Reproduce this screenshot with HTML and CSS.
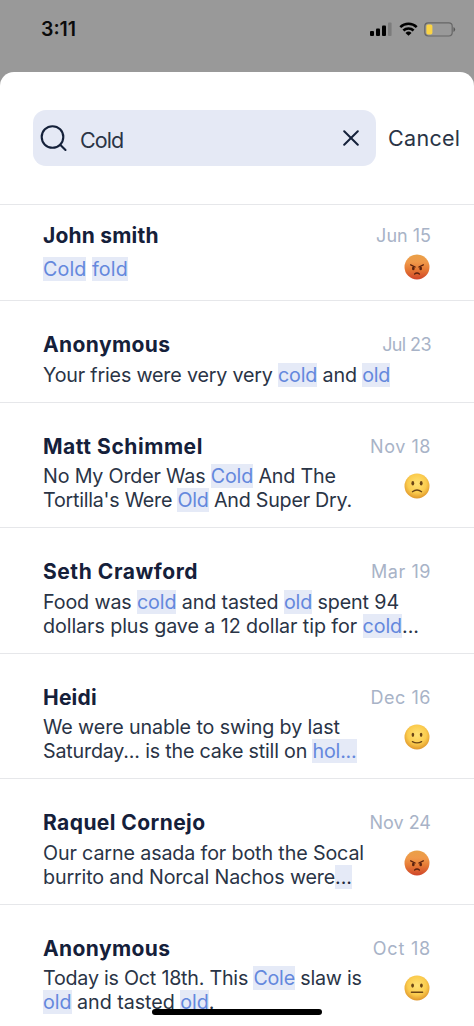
FILE: index.html
```
<!DOCTYPE html>
<html lang="en">
<head>
<meta charset="utf-8">
<title>Search</title>
<link rel="stylesheet" href="styles.css">
</head>
<body>
<svg class="defs" width="0" height="0" aria-hidden="true">
  <defs>
    <linearGradient id="red" x1="0" y1="0" x2="0" y2="1"><stop offset="0" stop-color="#e9a048"/><stop offset=".3" stop-color="#f0994a"/><stop offset=".6" stop-color="#e67a35"/><stop offset="1" stop-color="#cf452a"/></linearGradient>
    <radialGradient id="yellow" cx=".5" cy=".4" r=".62"><stop offset="0" stop-color="#ffe274"/><stop offset=".6" stop-color="#fbcc4e"/><stop offset="1" stop-color="#dd9228"/></radialGradient>
    <symbol id="angry" viewBox="0 0 26 26"><circle cx="13" cy="13" r="12.5" fill="url(#red)"/><path d="M6.7 10.8l4.4 2.2M19.3 10.8l-4.4 2.2M10.6 20q2.4-2 4.8 0" fill="none" stroke="#5b220f" stroke-width="1.3" stroke-linecap="round"/><ellipse cx="9.3" cy="14.4" rx="1.3" ry="1.9" fill="#5b220f"/><ellipse cx="16.7" cy="14.4" rx="1.3" ry="1.9" fill="#5b220f"/></symbol>
    <symbol id="sad" viewBox="0 0 26 26"><circle cx="13" cy="13" r="12.5" fill="url(#yellow)"/><ellipse cx="8.8" cy="10.3" rx="1.4" ry="2.2" fill="#6b4516"/><ellipse cx="17.2" cy="10.3" rx="1.4" ry="2.2" fill="#6b4516"/><path d="M8.4 18.7q4.6-3.4 9.2 0" fill="none" stroke="#6b4516" stroke-width="1.3" stroke-linecap="round"/></symbol>
    <symbol id="smile" viewBox="0 0 26 26"><circle cx="13" cy="13" r="12.5" fill="url(#yellow)"/><ellipse cx="8.9" cy="10.8" rx="1.3" ry="2.1" fill="#6b4516"/><ellipse cx="17.1" cy="10.8" rx="1.3" ry="2.1" fill="#6b4516"/><path d="M8.4 17.6q4.6 2.6 9.2 0" fill="none" stroke="#6b4516" stroke-width="1.3" stroke-linecap="round"/></symbol>
    <symbol id="neutral" viewBox="0 0 26 26"><circle cx="13" cy="13" r="12.5" fill="url(#yellow)"/><ellipse cx="8.6" cy="10.6" rx="1.4" ry="2.1" fill="#6b4516"/><ellipse cx="17.4" cy="10.6" rx="1.4" ry="2.1" fill="#6b4516"/><path d="M7.4 17.3h11.2" fill="none" stroke="#6b4516" stroke-width="1.4" stroke-linecap="round"/></symbol>
  </defs>
</svg>
<div class="screen">
  <header class="status">
    <span class="time">3:11</span>
    <div class="indicators">
      <svg class="signal" viewBox="0 0 22 14"><rect x="0" y="9" width="4" height="5" rx="1"/><rect x="6" y="6.5" width="4" height="7.5" rx="1"/><rect x="12" y="3.5" width="4" height="10.5" rx="1"/><rect class="off" x="18" y="0.5" width="3.6" height="13.5" rx="1"/></svg>
      <svg class="wifi" viewBox="0 0 19 14"><path d="M1.3 5.2a11.6 11.6 0 0 1 16.4 0M4.4 8.5a7.2 7.2 0 0 1 10.2 0" fill="none" stroke="#000" stroke-width="2.5"/><path d="M9.5 13.8L6.5 10.9a4.3 4.3 0 0 1 6 0z"/></svg>
      <svg class="battery" viewBox="0 0 32 15"><rect x=".8" y=".8" width="27.4" height="13.2" rx="3.4" fill="none" stroke="#666" stroke-width="1.2"/><rect x="2.4" y="2.4" width="6" height="10" rx="1.6" fill="#fbd444"/><path d="M29.5 5v5q1.6-.8 1.6-2.5T29.5 5z" fill="#555"/></svg>
    </div>
  </header>
  <main class="sheet">
    <div class="search">
      <div class="field">
        <svg class="glass" viewBox="0 0 28 28"><circle cx="12.5" cy="13" r="10.8"/><path d="M20.2 20.7l5.3 5.3"/></svg>
        <span class="query">Cold</span>
        <svg class="clear" viewBox="0 0 16 16"><path d="M1.2 1.2l13.6 13.6M14.8 1.2L1.2 14.8"/></svg>
      </div>
      <span class="cancel">Cancel</span>
    </div>
    <ul class="results">
      <li class="item first">
        <div class="text"><h2 class="n1">John smith</h2><p><span class="line a1"><mark>Cold</mark> <mark>fold</mark></span></p></div>
        <div class="side"><time>Jun 15</time><svg class="emoji"><use href="#angry"/></svg></div>
      </li>
      <li class="item">
        <div class="text"><h2 class="n2">Anonymous</h2><p><span class="line b1">Your fries were very very <mark>cold</mark> and <mark>old</mark></span></p></div>
        <div class="side"><time class="t2">Jul 23</time></div>
      </li>
      <li class="item">
        <div class="text"><h2 class="n3">Matt Schimmel</h2><p><span class="line c1">No My Order Was <mark>Cold</mark> And The</span><span class="line c2">Tortilla's Were <mark>Old</mark> And Super Dry.</span></p></div>
        <div class="side"><time class="t3">Nov 18</time><svg class="emoji"><use href="#sad"/></svg></div>
      </li>
      <li class="item">
        <div class="text"><h2 class="n3">Seth Crawford</h2><p><span class="line d1">Food was <mark>cold</mark> and tasted <mark>old</mark> spent 94</span><span class="line d2">dollars plus gave a 12 dollar tip for <mark>cold</mark>...</span></p></div>
        <div class="side"><time class="t3">Mar 19</time></div>
      </li>
      <li class="item">
        <div class="text"><h2 class="n1">Heidi</h2><p><span class="line e1">We were unable to swing by last</span><span class="line e2">Saturday... is the cake still on <mark>hol...</mark></span></p></div>
        <div class="side"><time class="t3">Dec 16</time><svg class="emoji"><use href="#smile"/></svg></div>
      </li>
      <li class="item">
        <div class="text"><h2 class="n6">Raquel Cornejo</h2><p><span class="line f1">Our carne asada for both the Socal</span><span class="line f2">burrito and Norcal Nachos were<mark class="dark">...</mark></span></p></div>
        <div class="side"><time>Nov 24</time><svg class="emoji"><use href="#angry"/></svg></div>
      </li>
      <li class="item">
        <div class="text"><h2 class="n2">Anonymous</h2><p><span class="line g1">Today is Oct 18th. This <mark>Cole</mark> slaw is</span><span class="line g2"><mark>old</mark> and tasted <mark>old</mark>.</span></p></div>
        <div class="side"><time class="t7">Oct 18</time><svg class="emoji"><use href="#neutral"/></svg></div>
      </li>
    </ul>
  </main>
  <div class="home"></div>
</div>
</body>
</html>
```
FILE: styles.css
```
* { box-sizing: border-box; }
body { margin: 0; font-family: Inter, "Liberation Sans", sans-serif; color: #2a3446; background: #999; }
.defs { position: absolute; }
.screen { position: relative; width: 474px; height: 1026px; overflow: hidden; background: #999; }
.status { height: 72px; padding: 15px 18px 0 41px; display: flex; justify-content: space-between; align-items: flex-start; }
.time { font-size: 19.5px; line-height: 28px; font-weight: 600; color: #0b0b0b; }
.indicators { display: flex; align-items: center; height: 28px; }
.signal { width: 22px; height: 14px; margin-right: 7px; }
.signal .off { fill: #7c7c7c; }
.wifi { width: 19px; height: 14px; margin-right: 6px; }
.battery { width: 32px; height: 15px; }
.sheet { background: #fff; border-radius: 14px 14px 0 0; height: 954px; padding-top: 38px; }
.search { display: flex; align-items: center; height: 56px; margin-left: 33px; }
.field { width: 343px; height: 56px; border-radius: 13px; background: #e5e9f5; display: flex; align-items: center; padding: 0 17px 0 7px; }
.glass { width: 28px; height: 28px; fill: none; stroke: #15213a; stroke-width: 2.1; stroke-linecap: round; }
.query { flex: 1; margin-left: 12px; padding-top: 4px; font-size: 21.5px; letter-spacing: -.9px; }
.clear { width: 16px; height: 16px; fill: none; stroke: #15213a; stroke-width: 2; stroke-linecap: round; }
.cancel { margin-left: 12px; font-size: 21.5px; letter-spacing: .3px; }
.results { list-style: none; margin: 38px 0 0; padding: 0; border-top: 1px solid #e6e7ea; }
.item { height: 125.5px; border-bottom: 1px solid #e6e7ea; padding: 29px 43px 0; display: flex; }
.item:nth-child(2) { height: 101.5px; }
.item.first { height: 96px; padding-top: 16px; }
.text { width: 318px; flex: none; white-space: nowrap; }
h2 { margin: 0 0 3.5px; font-size: 21px; line-height: 29px; font-weight: 700; color: #15203a; }
.first h2 { margin-bottom: 6.5px; }
.n1 { letter-spacing: .2px; }
.n2 { letter-spacing: .4px; }
.n3 { letter-spacing: .55px; }
.n6 { letter-spacing: .42px; }
p { margin: 0; font-size: 19.7px; line-height: 24px; }
.line { display: block; height: 24px; }
.a1 { letter-spacing: .1px; }
.b1 { letter-spacing: -.18px; }
.c1 { letter-spacing: -.18px; }
.c2 { letter-spacing: -.24px; }
.d1 { letter-spacing: -.13px; }
.d2 { letter-spacing: -.08px; }
.e1 { letter-spacing: -.1px; }
.e2 { letter-spacing: -.19px; }
.f1 { letter-spacing: -.13px; }
.f2 { letter-spacing: -.15px; }
.g1 { letter-spacing: -.23px; }
.g2 { letter-spacing: -.03px; }
mark { background: #e5eaf7; color: #6488dd; }
mark.dark { color: #1f2a3d; }
.side { width: 70px; flex: none; display: flex; flex-direction: column; align-items: flex-end; white-space: nowrap; }
time { font-size: 18px; line-height: 29px; color: #a8b3c7; }
.t2 { letter-spacing: -.6px; }
.t3 { letter-spacing: .55px; }
.t7 { letter-spacing: .8px; }
.emoji { width: 26px; height: 26px; margin: 12.5px 1px 0 0; }
.first .emoji { margin-top: 4px; }
.home { position: absolute; left: 152px; top: 1009px; width: 170px; height: 6px; border-radius: 3px; background: #000; }
```
